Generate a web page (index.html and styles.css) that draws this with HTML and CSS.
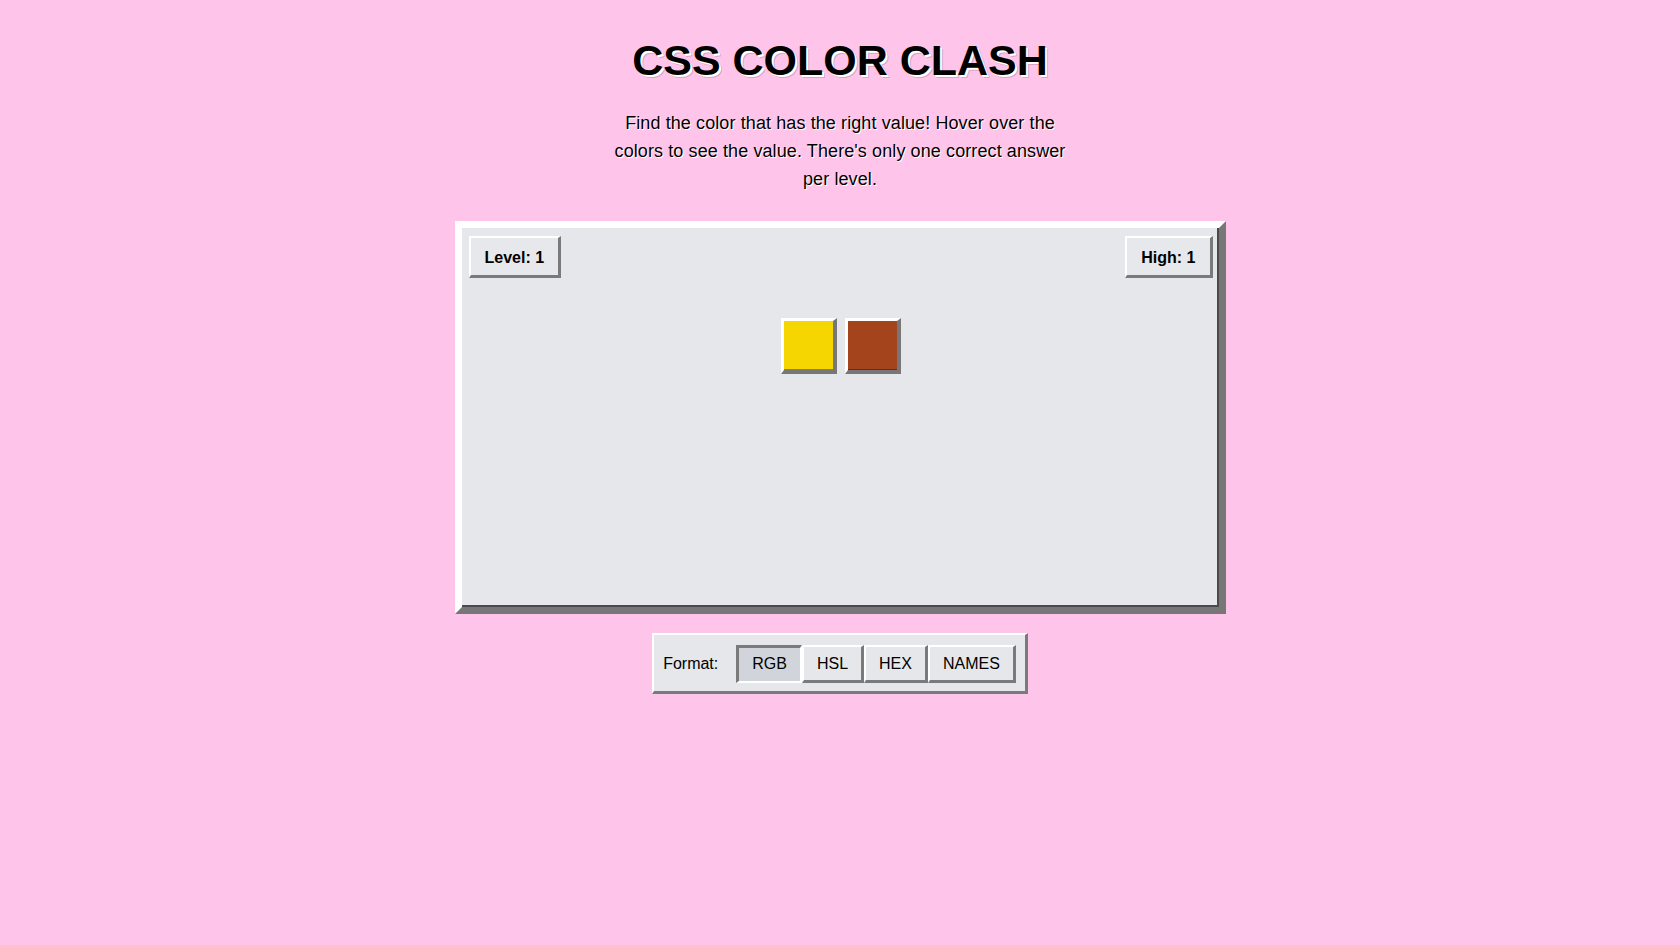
FILE: index.html
```html
<!DOCTYPE html>
<html lang="en">
<head>
<meta charset="utf-8">
<title>CSS Color Clash</title>
<link rel="stylesheet" href="styles.css">
</head>
<body>
  <main class="page">
    <h1 class="title">CSS COLOR CLASH</h1>
    <p class="intro">Find the color that has the right value! Hover over the colors to see the value. There's only one correct answer per level.</p>

    <section class="board">
      <div class="board-head">
        <div class="badge">Level: 1</div>
        <div class="badge">High: 1</div>
      </div>
      <div class="swatches">
        <button class="swatch swatch-yellow" aria-label="color 1"></button>
        <button class="swatch swatch-brown" aria-label="color 2"></button>
      </div>
    </section>

    <div class="format-bar">
      <span class="format-label">Format:</span>
      <div class="format-buttons">
        <button class="fmt fmt-active">RGB</button>
        <button class="fmt">HSL</button>
        <button class="fmt">HEX</button>
        <button class="fmt">NAMES</button>
      </div>
    </div>
  </main>
</body>
</html>
```

FILE: styles.css
```css
* {
  box-sizing: border-box;
}

html, body {
  margin: 0;
  padding: 0;
}

body {
  background: #ffc4e9;
  font-family: "Liberation Sans", Arial, sans-serif;
  color: #000;
  min-height: 945px;
}

.page {
  display: flex;
  flex-direction: column;
  align-items: center;
  padding-top: 36px;
}

.title {
  margin: 0;
  font-size: 43px;
  line-height: 48px;
  font-weight: 700;
  letter-spacing: 0;
  text-shadow: 2px 2px 0 #ffffff, 3px 3px 0 rgba(0, 0, 0, 0.18);
}

.intro {
  margin: 25px 0 0 0;
  max-width: 460px;
  text-align: center;
  font-size: 18px;
  line-height: 28px;
  letter-spacing: 0.1px;
  text-shadow: 1px 1px 0 #ffffff;
}

.board {
  margin-top: 28px;
  width: 771px;
  height: 393px;
  background: #e5e7eb;
  border: 7px solid;
  border-color: #ffffff #777777 #777777 #ffffff;
  box-shadow: inset -2px -2px 0 #4a4a4a;
  padding: 8px 6px 7px 7px;
  display: flex;
  flex-direction: column;
}

.board-head {
  display: flex;
  justify-content: space-between;
  align-items: flex-start;
}

.badge {
  background: #e7e8ec;
  border-style: solid;
  border-width: 2px 3px 3px 2px;
  border-color: #ffffff #7a7a7a #7a7a7a #ffffff;
  padding: 11px 14px 8px 14px;
  font-size: 16px;
  line-height: 18px;
  font-weight: 700;
}

.swatches {
  margin-top: 40px;
  display: flex;
  justify-content: center;
  gap: 8px;
}

.swatch {
  width: 56px;
  height: 56px;
  padding: 0;
  border-style: solid;
  border-width: 3px 4px 4px 3px;
  border-color: #ffffff #777777 #777777 #ffffff;
  box-shadow: inset 0 -1px 0 rgba(0, 0, 0, 0.35);
  cursor: pointer;
}

.swatch-yellow {
  background: #f5d600;
}

.swatch-brown {
  background: #a3441c;
}

.format-bar {
  margin-top: 19px;
  display: flex;
  align-items: center;
  background: #e5e7eb;
  border-style: solid;
  border-width: 2px 3px 3px 2px;
  border-color: #ffffff #7a7a7a #7a7a7a #ffffff;
  padding: 10px 9px 8px 9px;
}

.format-label {
  font-size: 16px;
  line-height: 18px;
  margin-right: 18px;
}

.format-buttons {
  display: flex;
}

.fmt {
  font-family: "Liberation Sans", Arial, sans-serif;
  font-size: 16px;
  line-height: 18px;
  height: 38px;
  padding: 0 13px;
  background: #e5e7eb;
  color: #000;
  border-style: solid;
  border-width: 2px 3px 3px 2px;
  border-color: #ffffff #7a7a7a #7a7a7a #ffffff;
  margin: 0;
  cursor: pointer;
}

.fmt-active {
  background: #d1d5db;
  border-width: 3px 2px 2px 3px;
  border-color: #7a7a7a #ffffff #ffffff #7a7a7a;
  padding-top: 0;
  padding-bottom: 1px;
}
```
